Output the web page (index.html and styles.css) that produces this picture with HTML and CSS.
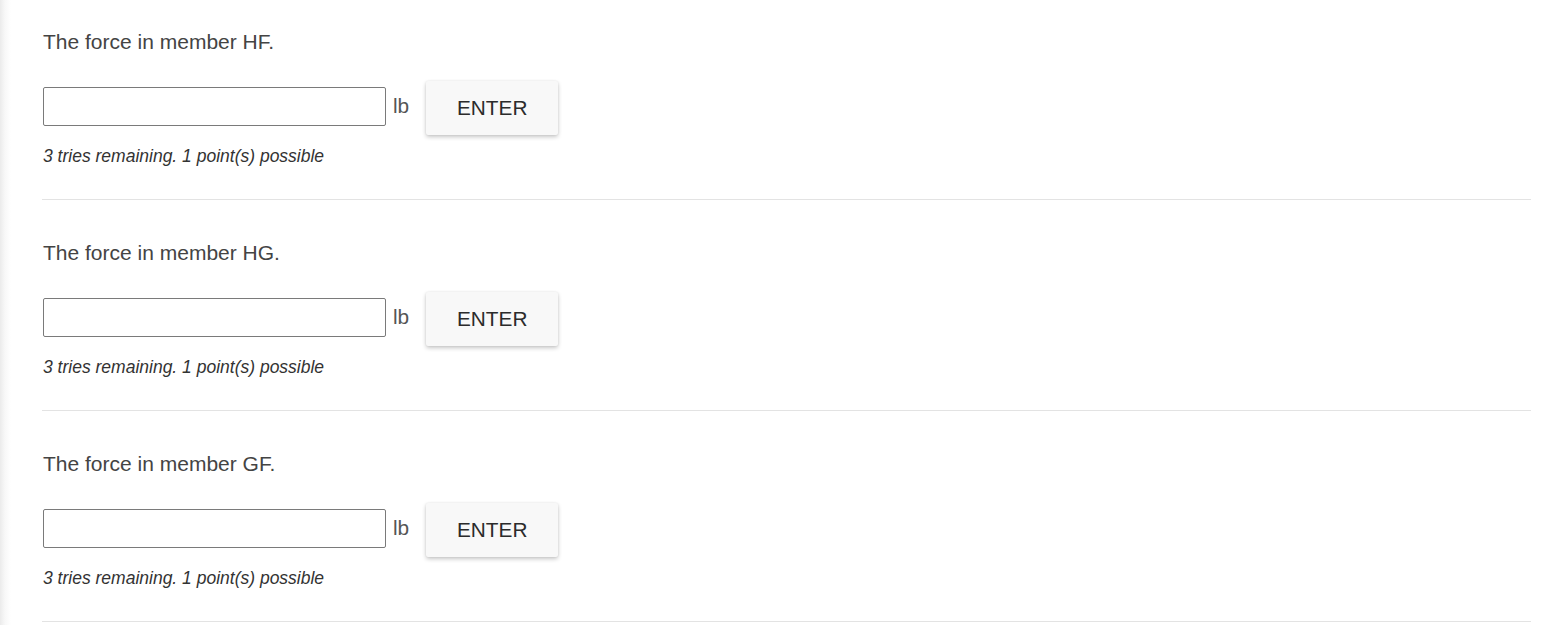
FILE: index.html
```html
<!DOCTYPE html>
<html lang="en">
<head>
  <meta charset="UTF-8">
  <meta name="viewport" content="width=device-width, initial-scale=1.0">
  <title>Truss Members</title>
  <link rel="stylesheet" href="styles.css">
</head>
<body>
  <main class="page">

    <!-- Question: HF -->
    <section class="question">
      <p class="question-text">The force in member HF.</p>
      <div class="answer-row">
        <input class="answer-input" type="text" aria-label="Force in HF">
        <span class="unit">lb</span>
        <button class="enter-btn" type="button">ENTER</button>
      </div>
      <p class="tries">3 tries remaining. 1 point(s) possible</p>
    </section>

    <!-- Question: HG -->
    <section class="question">
      <p class="question-text">The force in member HG.</p>
      <div class="answer-row">
        <input class="answer-input" type="text" aria-label="Force in HG">
        <span class="unit">lb</span>
        <button class="enter-btn" type="button">ENTER</button>
      </div>
      <p class="tries">3 tries remaining. 1 point(s) possible</p>
    </section>

    <!-- Question: GF -->
    <section class="question">
      <p class="question-text">The force in member GF.</p>
      <div class="answer-row">
        <input class="answer-input" type="text" aria-label="Force in GF">
        <span class="unit">lb</span>
        <button class="enter-btn" type="button">ENTER</button>
      </div>
      <p class="tries">3 tries remaining. 1 point(s) possible</p>
    </section>

  </main>
</body>
</html>
```

FILE: styles.css
```css
html, body {
  margin: 0;
  padding: 0;
  background-color: #fff;
}

body {
  font-family: "Liberation Sans", Arial, sans-serif;
  color: #444;
  min-height: 100vh;
  background: linear-gradient(to right, #ebebeb 0, #f8f8f8 5px, #fff 11px);
}

.page {
  padding: 0 26px 0 42px;
}

.question {
  padding: 29px 0 32px 1px;
  border-bottom: 1px solid #e3e3e3;
}

.question + .question {
  padding-top: 40px;
}

.question-text {
  margin: 0;
  font-size: 21px;
  line-height: 26px;
  color: #444;
}

.answer-row {
  display: flex;
  align-items: flex-start;
  margin-top: 26px;
}

.answer-input {
  box-sizing: border-box;
  width: 343px;
  height: 39px;
  margin: 6px 0 0 0;
  border: 1px solid #7a7a7a;
  border-radius: 2px;
  background: #fff;
  font-family: inherit;
  font-size: 18px;
  padding: 0 8px;
}

.unit {
  margin: 12px 0 0 7px;
  font-size: 20.8px;
  line-height: 26px;
  color: #555;
}

.enter-btn {
  width: 132px;
  height: 54px;
  margin-left: 17px;
  border: none;
  border-radius: 2px;
  background-color: #f8f8f8;
  color: #2b2b2b;
  font-family: inherit;
  font-size: 20.8px;
  cursor: pointer;
  box-shadow: 0 2px 4px rgba(0, 0, 0, 0.22), 0 0 2px rgba(0, 0, 0, 0.08);
}

.enter-btn:hover {
  background-color: #eee;
}

.tries {
  margin: 10px 0 0 0;
  font-size: 17.5px;
  line-height: 22px;
  font-style: italic;
  color: #333;
}
```
